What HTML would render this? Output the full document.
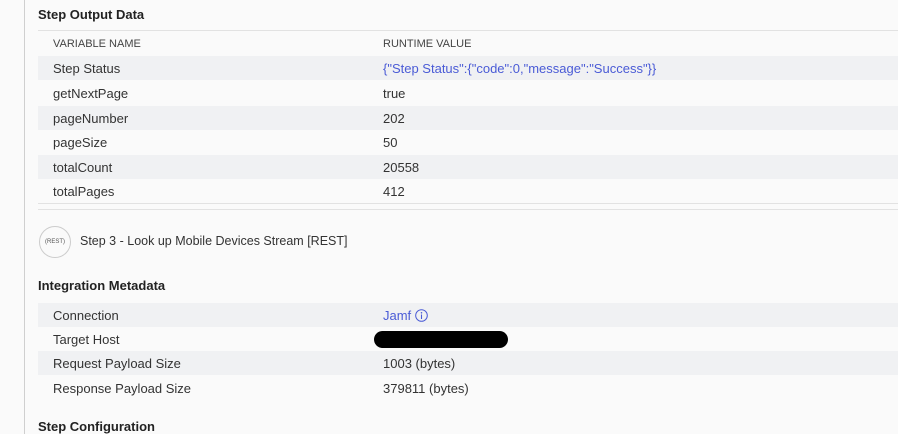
<!DOCTYPE html>
<html><head><meta charset="utf-8"><style>
body{margin:0;width:898px;height:434px;overflow:hidden;background:#fafafa;font-family:"Liberation Sans",sans-serif;color:#333;position:relative}
.vl{position:absolute;left:24px;top:0;width:1px;height:434px;background:#cfcfcf}
.h{position:absolute;left:38px;font-weight:bold;font-size:13px;color:#222}
.row{position:absolute;left:38px;width:860px;height:24px;font-size:13px;line-height:26px}
.row.s{background:#f0f1f3}
.row span{position:absolute;left:15px}
.row b{position:absolute;left:345px;font-weight:normal}
.line{position:absolute;left:38px;width:860px;height:1px;background:#e2e2e2}
.blue{color:#4a5bd6}
</style></head><body>
<div class="vl"></div>
<div class="h" style="top:7px">Step Output Data</div>
<div class="line" style="top:30px"></div>
<div class="row" style="top:31px;font-size:11px;color:#444"><span>VARIABLE NAME</span><b>RUNTIME VALUE</b></div>
<div class="row s" style="top:56px"><span>Step Status</span><b class="blue">{"Step Status":{"code":0,"message":"Success"}}</b></div>
<div class="row" style="top:81px"><span>getNextPage</span><b>true</b></div>
<div class="row s" style="top:106px"><span>pageNumber</span><b>202</b></div>
<div class="row" style="top:130px"><span>pageSize</span><b>50</b></div>
<div class="row s" style="top:155px"><span>totalCount</span><b>20558</b></div>
<div class="row" style="top:179px"><span>totalPages</span><b>412</b></div>
<div class="line" style="top:203px"></div>
<div class="line" style="top:209px"></div>
<div style="position:absolute;left:39px;top:226px;width:30px;height:30px;border:1px solid #ccc;border-radius:50%;font-size:6px;line-height:30px;text-align:center;color:#555">(REST)</div>
<div style="position:absolute;left:80px;top:234px;font-size:12.5px">Step 3 - Look up Mobile Devices Stream [REST]</div>
<div class="h" style="top:278px">Integration Metadata</div>
<div class="row s" style="top:303px"><span>Connection</span><b class="blue">Jamf <svg width="13" height="13" viewBox="0 0 13 13" style="vertical-align:-2px"><circle cx="6.5" cy="6.5" r="5.8" fill="none" stroke="#4a5bd6" stroke-width="1"/><circle cx="6.5" cy="3.8" r=".8" fill="#4a5bd6"/><path d="M6.5 5.5v4.5" stroke="#4a5bd6" stroke-width="1.1"/></svg></b></div>
<div class="row" style="top:327px"><span>Target Host</span></div>
<div style="position:absolute;left:374px;top:331px;width:134px;height:17px;background:#000;border-radius:9px"></div>
<div class="row s" style="top:351px"><span>Request Payload Size</span><b>1003 (bytes)</b></div>
<div class="row" style="top:376px"><span>Response Payload Size</span><b>379811 (bytes)</b></div>
<div class="h" style="top:419px">Step Configuration</div>
</body></html>
